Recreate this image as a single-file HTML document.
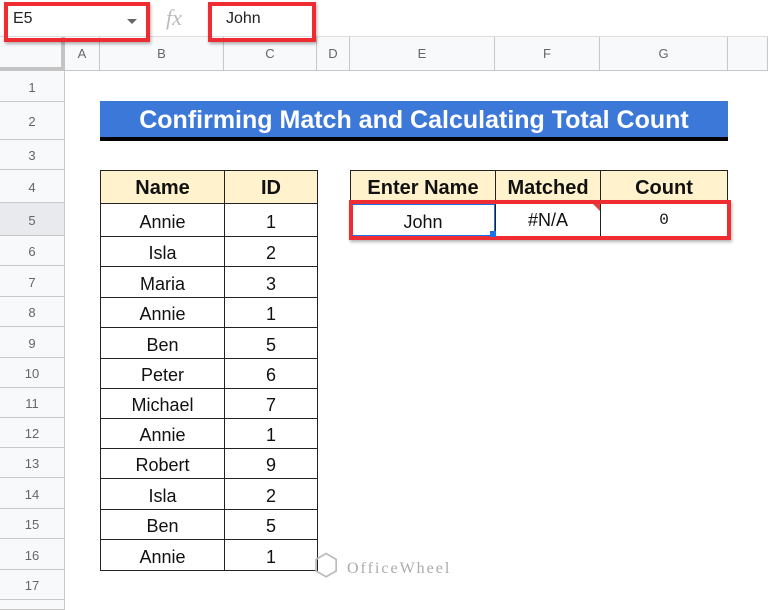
<!DOCTYPE html>
<html><head><style>
*{margin:0;padding:0;box-sizing:border-box}
body{width:768px;height:606px;overflow:hidden;background:#fff;font-family:"Liberation Sans",Arial,sans-serif;position:relative}
.a{position:absolute}
.ch{position:absolute;top:37px;height:34px;background:#f8f9fa;border-right:1px solid #c8c8c8;border-bottom:1px solid #c8c8c8;color:#666;font-size:13px;display:flex;align-items:center;justify-content:center}
.rh{position:absolute;left:0;width:65px;background:#f8f9fa;border-bottom:1px solid #c8c8c8;border-right:1px solid #c8c8c8;color:#666;font-size:13px;display:flex;align-items:center;justify-content:center;padding-top:2px}
.c{position:absolute;border:1px solid #222;display:flex;align-items:center;justify-content:center;font-size:18px;color:#111;padding-top:4px}
.h{background:#fff2cc;font-weight:bold;font-size:20px;padding-top:2px}
.red{position:absolute;border:4px solid #ee2c32;box-shadow:1px 2px 3px rgba(0,0,0,.3);z-index:5}
</style></head><body>
<div class="a" style="left:0;top:0;width:768px;height:37px;background:#fff;border-bottom:1px solid #ddd"></div>
<div class="a" style="left:13px;top:10px;font-size:16px;color:#222">E5</div>
<div class="a" style="left:127px;top:19px;width:0;height:0;border-left:5px solid transparent;border-right:5px solid transparent;border-top:5px solid #666"></div>
<div class="a" style="left:166px;top:5px;font-size:22px;color:#bbb;font-style:italic;font-family:'Liberation Serif',serif">fx</div>
<div class="a" style="left:226px;top:10px;font-size:16px;color:#222">John</div>
<div class="a" style="left:0;top:37px;width:65px;height:34px;background:#f8f9fa;border-right:4px solid #c4c4c4;border-bottom:4px solid #c4c4c4"></div>
<div class="ch" style="left:65px;width:35px">A</div>
<div class="ch" style="left:100px;width:124px">B</div>
<div class="ch" style="left:224px;width:93px">C</div>
<div class="ch" style="left:317px;width:33px">D</div>
<div class="ch" style="left:350px;width:145px">E</div>
<div class="ch" style="left:495px;width:105px">F</div>
<div class="ch" style="left:600px;width:128px">G</div>
<div class="ch" style="left:728px;width:40px"></div>
<div class="red" style="left:4px;top:2px;width:146px;height:40px"></div>
<div class="red" style="left:208px;top:2px;width:108px;height:40px"></div>
<div class="rh" style="top:71px;height:31px">1</div>
<div class="rh" style="top:102px;height:38px">2</div>
<div class="rh" style="top:140px;height:30px">3</div>
<div class="rh" style="top:170px;height:33px">4</div>
<div class="rh" style="top:203px;height:33px;background:#e8eaed">5</div>
<div class="rh" style="top:236px;height:30px">6</div>
<div class="rh" style="top:266px;height:31px">7</div>
<div class="rh" style="top:297px;height:30px">8</div>
<div class="rh" style="top:327px;height:31px">9</div>
<div class="rh" style="top:358px;height:30px">10</div>
<div class="rh" style="top:388px;height:30px">11</div>
<div class="rh" style="top:418px;height:30px">12</div>
<div class="rh" style="top:448px;height:30px">13</div>
<div class="rh" style="top:478px;height:31px">14</div>
<div class="rh" style="top:509px;height:30px">15</div>
<div class="rh" style="top:539px;height:31px">16</div>
<div class="rh" style="top:570px;height:30px">17</div>
<div class="rh" style="top:600px;height:10px"></div>
<div class="a" style="left:100px;top:101px;width:628px;height:40px;background:#3c78d8;border-bottom:4px solid #000;color:#fff;font-weight:bold;font-size:25px;display:flex;align-items:center;justify-content:center;padding-top:2px">Confirming Match and Calculating Total Count</div>
<div class="c h" style="left:100px;top:170px;width:125px;height:34px">Name</div>
<div class="c h" style="left:224px;top:170px;width:94px;height:34px">ID</div>
<div id="t"></div>
<div class="c h" style="left:350px;top:170px;width:146px;height:34px">Enter Name</div>
<div class="c h" style="left:495px;top:170px;width:106px;height:34px">Matched</div>
<div class="c h" style="left:600px;top:170px;width:128px;height:34px">Count</div>
<div class="c" style="left:350px;top:203px;width:146px;height:34px;border:2px solid #1a73e8">John</div>
<div class="a" style="left:490px;top:231px;width:6px;height:6px;background:#1a73e8;z-index:6"></div>
<div class="c" style="left:495px;top:203px;width:106px;height:34px;padding-top:0">#N/A</div>
<div class="a" style="left:593px;top:204px;width:0;height:0;border-left:7px solid transparent;border-top:7px solid #d44"></div>
<div class="c" style="left:600px;top:203px;width:128px;height:34px;font-family:'Liberation Mono',monospace;font-size:16px;padding-top:0">0</div>
<div class="red" style="left:349px;top:200px;width:382px;height:40px"></div>
<div class="a" style="left:313px;top:550px;width:32px;height:32px;font-size:30px;line-height:32px;color:#bbb">⬡</div>
<div class="a" style="left:347px;top:560px;font-family:'Liberation Serif',serif;font-size:16px;letter-spacing:2px;color:#aaa">OfficeWheel</div>
<script>
var d=[["Annie",1],["Isla",2],["Maria",3],["Annie",1],["Ben",5],["Peter",6],["Michael",7],["Annie",1],["Robert",9],["Isla",2],["Ben",5],["Annie",1]];
var tops=[203,236,266,297,327,358,388,418,448,478,509,539,570],h="";
d.forEach(function(r,i){var t=tops[i],hh=tops[i+1]-t+1;
h+='<div class="c" style="left:100px;top:'+t+'px;width:125px;height:'+hh+'px">'+r[0]+'</div><div class="c" style="left:224px;top:'+t+'px;width:94px;height:'+hh+'px">'+r[1]+'</div>';});
document.getElementById("t").outerHTML=h;
</script>
</body></html>
